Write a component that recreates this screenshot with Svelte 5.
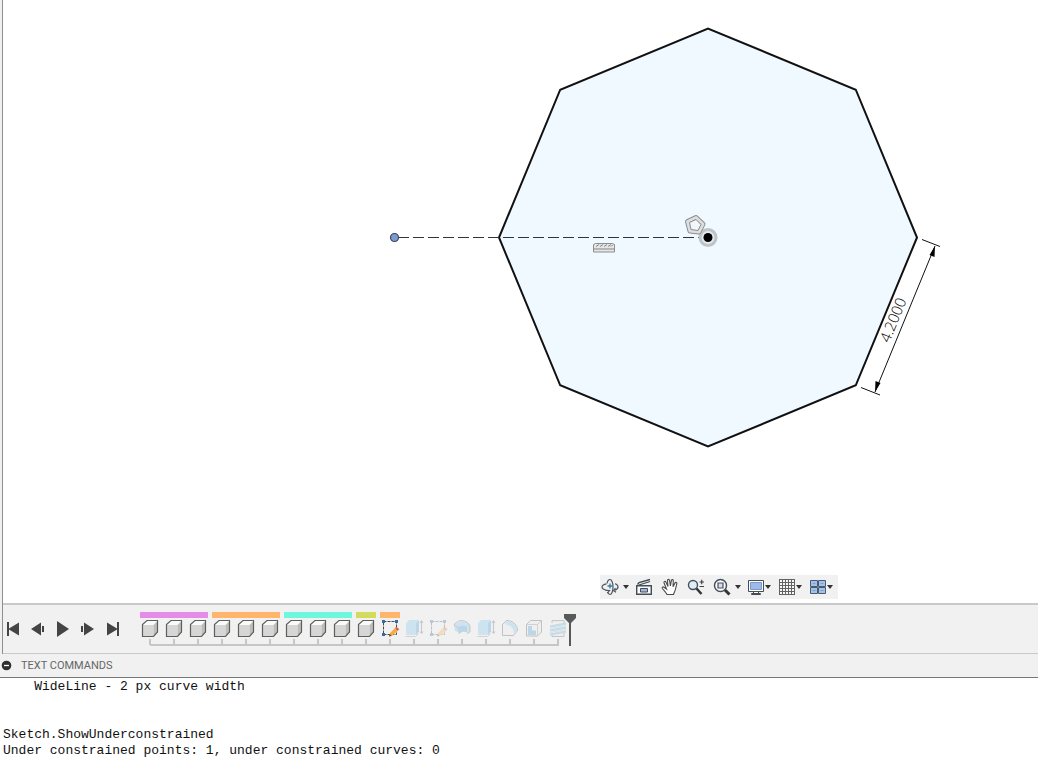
<script>
  const center = { x: 708, y: 237.5 };
  const radius = 209;

  // The eight corners of the sketched polygon
  const corners = Array.from({ length: 8 }, (_, i) => {
    const angle = (i * Math.PI) / 4;
    return `${center.x + radius * Math.cos(angle)},${center.y + radius * Math.sin(angle)}`;
  }).join(' ');

  const playback = [
    { label: 'Go to beginning', path: 'M4 3h2v6.500L16 3.500v13L6 10.500V17H4z' },
    { label: 'Step back', path: 'M3 10l10-6.500v13zM14 7h2v6h-2z' },
    { label: 'Play', path: 'M4 2l12 8-12 8z' },
    { label: 'Step forward', path: 'M3 7h2v6H3zM6 3.500l10 6.500-10 6.500z' },
    { label: 'Go to end', path: 'M4 3.500l10 6V3h2v14h-2v-6.500l-10 6z' }
  ];

  const groups = [
    { color: 'pink', items: ['body', 'body', 'body'] },
    { color: 'orange', items: ['body', 'body', 'body'] },
    { color: 'aqua', items: ['body', 'body', 'body'] },
    { color: 'olive', items: ['body'] },
    { color: 'orange', items: ['sketch'] },
    { color: '', items: ['extrude', 'sketch', 'revolve', 'extrude', 'fillet', 'shell', 'thread'] }
  ];

  const viewTools = [
    { name: 'orbit', label: 'Orbit', menu: true },
    { name: 'look', label: 'Look at' },
    { name: 'pan', label: 'Pan' },
    { name: 'zoom', label: 'Zoom' },
    { name: 'fit', label: 'Fit', menu: true }
  ];

  const displayTools = [
    { name: 'display', label: 'Display settings', menu: true },
    { name: 'grid', label: 'Grid and snaps', menu: true },
    { name: 'views', label: 'Viewports', menu: true }
  ];

  const log = [
    '    WideLine - 2 px curve width',
    '',
    '',
    'Sketch.ShowUnderconstrained',
    'Under constrained points: 1, under constrained curves: 0'
  ].join('\n');

  let open = $state(true);
</script>

{#snippet toolButton(tool)}
  <button class="tool" aria-label={tool.label} title={tool.label}>
    <svg class="icon" viewBox="0 0 18 18">
      {#if tool.name === 'orbit'}
        <g fill="none" stroke="#4b5560" stroke-width="1.200">
          <path d="M6 5.500C6.500 3 7.500 1.500 9 1.500s3 3 3 7.500-1.500 7.500-3 7.500c-1.200 0-2-1-2.600-2.500" />
          <path d="M14 5.800c2 .6 3 1.700 3 3.200 0 1.500-1.500 2.700-3.500 3.200M8.500 12.500c-4.500 0-7.500-1.500-7.500-3.500 0-1.500 2-2.700 4.500-3.200" />
          <path d="M4.500 12.500L8.500 12.500 6.500 15M14.500 10l-2 2.500 2.500 1.700" />
        </g>
        <path d="M9 5.500v5M6.500 8h5" stroke="#3979a8" stroke-width="1.300" />
      {:else if tool.name === 'look'}
        <path d="M2.500 6.500l1.500-2L15 1.500M4 7l11-3.500" fill="none" stroke="#444c55" stroke-width="1.300" />
        <path d="M1.700 7.700h14.600v8.600H1.700z" fill="#f8fafc" stroke="#444c55" stroke-width="1.400" />
        <path d="M5.500 10.500h7v3.500h-7z" fill="#9fb7d9" stroke="#444c55" />
      {:else if tool.name === 'pan'}
        <path d="M6 16.500c-1-2.500-3-4-4.600-6-.8-1.100.5-2.100 1.600-1.200L5.500 11 3 4.800c-.4-1.400 1.300-2 1.900-.7L7 8.500 6.500 2.500c0-1.500 1.900-1.500 2.100 0L9.400 8l1-5.600c.4-1.300 2-.9 1.900.4L12 8.700l2-3.800c.7-1.100 2.200-.4 1.800.8L14.500 11c-.5 2.500-1.500 3.500-2 5.500z" fill="#fff" stroke="#4a4a4a" stroke-width="1.100" />
      {:else if tool.name === 'zoom'}
        <circle cx="6" cy="7" r="4.500" fill="#dfeefa" stroke="#46505a" stroke-width="1.400" />
        <path d="M9.500 10.500l5 5.500" stroke="#333" stroke-width="2.500" />
        <path d="M12.500 4H17M14.700 1.700v4.600M12.500 8.500H17" stroke="#444" stroke-width="1.200" />
      {:else if tool.name === 'fit'}
        <circle cx="7.500" cy="7.500" r="6" fill="#fff" stroke="#46505a" stroke-width="1.500" />
        <path d="M5 5h5v5H5z" fill="#d5dde8" stroke="#46505a" stroke-width="1.200" />
        <path d="M12 12l4.500 4.500" stroke="#333" stroke-width="3" />
      {:else if tool.name === 'display'}
        <path d="M1.500 2.500h15v11h-15z" fill="#fff" stroke="#444c55" />
        <path d="M3.500 4.500h11v7h-11z" fill="#9dbbe6" stroke="#7899cc" />
        <path d="M6.500 13.500h5v2h-5zM4.500 15.500h9v1h-9z" fill="#fff" stroke="#444c55" />
      {:else if tool.name === 'grid'}
        <path d="M1 1h16v16H1z" fill="#f7f7f7" />
        <path d="M1.500 1v16M4.500 1v16M7.500 1v16M10.500 1v16M13.500 1v16M16.500 1v16M1 1.500h16M1 4.500h16M1 7.500h16M1 10.500h16M1 13.500h16M1 16.500h16" stroke="#626262" />
      {:else}
        <path d="M1.500 2.500h7v6h-7zM9.500 2.500h7v6h-7zM1.500 9.500h7v6h-7zM9.500 9.500h7v6h-7z" fill="#a3c2ea" stroke="#4c5a70" />
        <path d="M3.500 5.500h3M11.500 5.500h3M3.500 12.500h3M11.500 12.500h3" stroke="#7d9cca" />
      {/if}
    </svg>
    {#if tool.menu}
      <svg class="caret" viewBox="0 0 6 4"><path d="M0 0h6L3 4z" fill="#333" /></svg>
    {/if}
  </button>
{/snippet}

{#snippet feature(name, faded, first, last)}
  <button class="feature" aria-label={name}>
    <svg viewBox="0 0 24 28">
      <path d="M{first ? 12 : 0} 27H{last ? 13 : 24}M12 21v6" stroke="#c6c6c6" stroke-width="2" />
      <g opacity={faded ? 0.3 : 1}>
        {#if name === 'body'}
          <path d="M4.500 6.500l4.500-4h10.500V14l-4 4.500h-11z" fill="#fafafa" />
          <path d="M5 7h10.500v11H5z" fill="#d6d6d6" />
          <path d="M15.500 7l4-4v11l-4 4z" fill="#bdbdbd" />
          <path d="M4.500 6.500l4.500-4h10.500V14l-4 4.500h-11z" fill="none" stroke="#60605a" stroke-width="1.200" />
        {:else if name === 'sketch'}
          <path d="M5.500 3.500h13v13h-13z" fill="none" stroke="#4a4a4a" stroke-dasharray="3 1" />
          <path d="M4 2h3v3H4zM17 2h3v3h-3zM4 15h3v3H4z" fill="#356d9f" />
          <path d="M11 18.500l1-3.500 5-5 3 2.500-5.500 5z" fill="#f5ad42" />
          <path d="M17 10l1.500-1.300 2.800 2.500-1.600 1.600z" fill="#e25b58" />
          <path d="M11 18.500l.8-2.500 1.800 1.800z" fill="#444" />
        {:else if name === 'extrude'}
          <path d="M4 5.500l3-3.500h10v11.500l-3 3.500H4z" fill="#7fc4f0" />
          <path d="M14 5.500l3-3.500v11.500l-3 3.500z" fill="#3f9ad2" />
          <path d="M3.500 18.500h10l3-3" fill="none" stroke="#8d8d8d" />
          <path d="M19.500 3v12M18 5l1.500-2.500L21 5M18 13.500l1.500 2 1.500-2" fill="none" stroke="#666" />
        {:else if name === 'revolve'}
          <path d="M4 8c3-6 13-6 16-1v6l-3 2.500v-2c-2-1.500-5-1-7 1.500L5 13z" fill="#7fc4f0" />
          <path d="M7 9.500c3-2 7-2 10-1v6c-3-1.500-6-1-8 2z" fill="#3f9ad2" />
          <path d="M4 7c3-6 13-6 16 1v6l-3 1.500M4 7l4 2.500" fill="none" stroke="#666" />
        {:else if name === 'fillet'}
          <path d="M4.500 17.500v-11l4-4c6 0 11 4 11 10l-4 5z" fill="#e5e5e5" stroke="#555" />
          <path d="M9 3c6 0 10 4 10 10l-3 3c0-5-3-9-9-10z" fill="#7fc4f0" />
          <path d="M5 7c6 0 10 4 10 10H5z" fill="#ededed" />
        {:else if name === 'shell'}
          <path d="M4.500 6.500l4-4h11V14l-4 4h-11z" fill="#ececec" stroke="#555" />
          <path d="M4.500 6.500h11V18M15.500 6.500l4-4" fill="none" stroke="#888" />
          <path d="M6 8h4v4.500h4V17H6z" fill="#3f9ad2" />
        {:else}
          <path d="M6 5V2.500h12V5M6 16v2.500h12V15" fill="#e5e5e5" stroke="#666" />
          <path d="M4 8.500l16-3M4 12.500l16-3M4 16.500l16-3" stroke="#52a9df" stroke-width="1.800" />
          <path d="M4 10.500l16-3M4 14.500l16-3" stroke="#aaa" />
        {/if}
      </g>
    </svg>
  </button>
{/snippet}

<div class="app">
  <div class="workspace">
    <main class="canvas">
      <svg class="drawing" viewBox="3 0 1035 603" preserveAspectRatio="xMidYMin meet">
        <polygon points={corners} fill="#eff9ff" stroke="#111" stroke-width="2" />
        <path d="M398 237.500H704" stroke="#30343c" stroke-width="1" stroke-dasharray="11 4" />
        <circle cx="394.500" cy="237.500" r="4" fill="#7b9bd0" stroke="#3c4660" stroke-width="1.200" />

        <!-- center point and its constraint glyphs -->
        <circle cx="708" cy="237.500" r="8" fill="#e4eaee" stroke="#c0c4c7" stroke-width="3" />
        <circle cx="708" cy="237.500" r="4.500" fill="#000" />
        <g fill="none" stroke-linejoin="round">
          <path d="M696 217.500l7 6.500-4 8-9-1-2.500-9.500z" stroke="#8d8d8d" stroke-width="5" />
          <path d="M696 217.500l7 6.500-4 8-9-1-2.500-9.500z" stroke="#dedede" stroke-width="3" />
          <path d="M696 219.500l5 5-3 6-7-1-1.500-7z" fill="#f1f7fb" stroke="#8d8d8d" />
        </g>
        <path d="M593.500 244.500l2-1h17l2 1v7.500h-21z" fill="#e6e6e6" stroke="#8d8d8d" />
        <path d="M594 249h20M596 246.500l3-2M600 246.500l3-2M604 246.500l3-2M608 246.500l3-2M611 246.500l2-2" stroke="#858585" />

        <g stroke="#111" fill="#000">
          <path d="M922 239.500l18 7M861 387.500l19 7.500M935 246l-60 146" fill="none" />
          <path d="M935 246l-.500 11-5-2zM875 392l.500-11 5 2z" stroke="none" />
        </g>
        <text class="dimension" transform="translate(898 322) rotate(-67.500)" text-anchor="middle">4.2000</text>
      </svg>

      <nav class="view-bar" aria-label="Navigation">
        <div class="tools">
          {#each viewTools as tool}{@render toolButton(tool)}{/each}
        </div>
        <div class="tools tight">
          {#each displayTools as tool}{@render toolButton(tool)}{/each}
        </div>
      </nav>
    </main>

    <section class="timeline" aria-label="Timeline">
      <div class="playback">
        {#each playback as control}
          <button aria-label={control.label} title={control.label}>
            <svg viewBox="0 0 20 20"><path d={control.path} fill="#444" /></svg>
          </button>
        {/each}
      </div>
      <div class="history">
        {#each groups as group, g}
          <div class="group">
            <div class="bar {group.color}"></div>
            <div class="features">
              {#each group.items as name, i}
                {@render feature(
                  name,
                  group.color === '',
                  g === 0 && i === 0,
                  g === groups.length - 1 && i === group.items.length - 1
                )}
              {/each}
            </div>
          </div>
        {/each}
        <svg class="marker" viewBox="0 0 14 34">
          <path d="M1 2h12v4L8 11v23H6V11L1 6z" fill="#595959" />
        </svg>
      </div>
    </section>
  </div>

  <section class="commands">
    <header>
      <button aria-label="Toggle text commands" aria-expanded={open} onclick={() => (open = !open)}>
        <svg viewBox="0 0 11 11">
          <circle cx="5.500" cy="5.500" r="4.800" fill="#2f2f2f" />
          <path d="M3 5.500h5" stroke="#fff" stroke-width="1.300" />
        </svg>
      </button>
      <h2>TEXT COMMANDS</h2>
    </header>
    {#if open}
      <pre>{log}</pre>
    {/if}
  </section>
</div>

<style>
  :global(body) {
    margin: 0;
    background: #fff;
  }

  .app {
    display: flex;
    flex-direction: column;
    min-height: 100vh;
    font-family: Roboto, "Liberation Sans", Arial, sans-serif;
  }

  button {
    padding: 0;
    border: none;
    background: none;
    cursor: pointer;
  }

  svg {
    display: block;
  }

  .workspace {
    flex: 1;
    display: flex;
    flex-direction: column;
    border-left: 1px solid #8f8f8f;
    margin-left: 2px;
    box-shadow: -2px 0 #f0f0f0;
  }

  .canvas {
    flex: 1;
    display: grid;
    background: #fff;
  }

  .drawing {
    grid-area: 1 / 1;
    width: 100%;
    height: 100%;
  }

  .dimension {
    font-family: "Open Sans", sans-serif;
    font-size: 15px;
    font-weight: 300;
    fill: #000;
  }

  .view-bar {
    grid-area: 1 / 1;
    place-self: end;
    display: flex;
    gap: 8px;
    margin: 0 200px 4px 0;
    padding: 3px 5px 3px 1px;
    background: #f1f1f1;
  }

  .tools {
    display: flex;
    gap: 8px;
  }

  .tool {
    display: flex;
    align-items: center;
  }

  .icon {
    width: 18px;
    height: 18px;
  }

  .caret {
    width: 6px;
    height: 4px;
    margin: 0 -2px 0 4px;
  }

  .tight {
    gap: 7px;
  }

  .tight .caret {
    margin: 0;
  }

  .timeline {
    display: flex;
    border-top: 2px solid #c9c9c9;
    border-bottom: 1px solid #c9c9c9;
    padding: 7px 0;
    background: #f1f1f1;
  }

  .playback {
    display: flex;
    align-items: center;
    gap: 5px;
    margin-right: 15px;
  }

  .playback svg {
    width: 20px;
    height: 20px;
  }

  .history {
    display: flex;
  }

  .bar {
    height: 6px;
    margin: 0 2px;
  }

  .pink {
    background: #e58be8;
  }

  .orange {
    background: #ffb66c;
  }

  .aqua {
    background: #6ef7dc;
  }

  .olive {
    background: #d3db5c;
  }

  .features {
    display: flex;
  }

  .feature svg {
    width: 24px;
    height: 28px;
  }

  .marker {
    width: 14px;
    height: 34px;
    margin-left: -7px;
    z-index: 1;
  }

  header {
    display: flex;
    align-items: center;
    gap: 9px;
    height: 23px;
    padding-left: 1px;
    border-bottom: 1px solid #777;
    background: #f1f1f1;
  }

  header svg {
    width: 11px;
    height: 11px;
  }

  h2 {
    margin: 0;
    font-size: 11px;
    font-weight: normal;
    color: #666;
  }

  pre {
    min-height: 80px;
    margin: 0;
    padding: 1px 3px 4px;
    font-family: "Liberation Mono", "Courier New", monospace;
    font-size: 13px;
    line-height: 16px;
    color: #111;
  }
</style>
